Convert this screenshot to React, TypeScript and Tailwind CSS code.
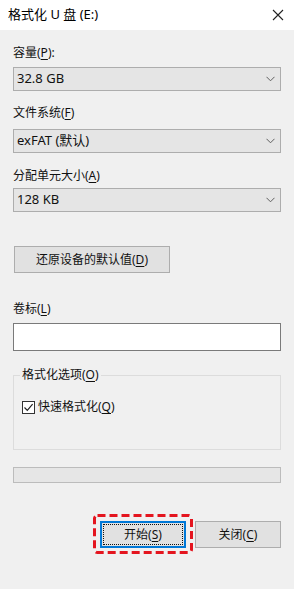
import React from "react";

const Chevron = () => (
  <svg width="9" height="6" viewBox="0 0 9 6" className="shrink-0">
    <path d="M0.5 0.8 L4.5 4.8 L8.5 0.8" fill="none" stroke="#5f5f5f" strokeWidth="1" />
  </svg>
);

const Combo = ({ value }: { value: string }) => (
  <div className="h-[24px] border border-[#adadad] bg-[#e5e5e5] flex items-center pl-[3px] pr-[5px] justify-between">
    <span className="text-[13px] text-[#111]">{value}</span>
    <Chevron />
  </div>
);

const U = ({ c }: { c: string }) => <span className="underline underline-offset-2">{c}</span>;

export default function App() {
  return (
    <div className="w-[294px] h-[589px] bg-[#f0f0f0] flex flex-col text-[12px] text-[#111] font-['Segoe_UI','Noto_Sans','Noto_Sans_CJK_SC',sans-serif] overflow-hidden">
      <div className="h-[30px] bg-white flex items-center justify-between pl-[8px] pr-[10px]">
        <span className="text-[13px] text-black">格式化 U 盘 (E:)</span>
        <svg width="12" height="12" viewBox="0 0 12 12">
          <path d="M1 1 L11 11 M11 1 L1 11" stroke="#222" strokeWidth="1.1" fill="none" />
        </svg>
      </div>
      <div className="flex flex-col px-[13px]">
        <div className="mt-[15px] h-[16px] leading-[16px]">容量(<U c="P" />):</div>
        <div className="mt-[6px]"><Combo value="32.8 GB" /></div>
        <div className="mt-[14px] h-[16px] leading-[16px]">文件系统(<U c="F" />)</div>
        <div className="mt-[8px]"><Combo value="exFAT (默认)" /></div>
        <div className="mt-[15px] h-[16px] leading-[16px]">分配单元大小(<U c="A" />)</div>
        <div className="mt-[4px]"><Combo value="128 KB" /></div>
        <div className="mt-[34px] ml-[1px] w-[156px] h-[27px] border border-[#adadad] bg-[#e1e1e1] flex items-center justify-center">
          还原设备的默认值(<U c="D" />)
        </div>
        <div className="mt-[28px] h-[16px] leading-[16px]">卷标(<U c="L" />)</div>
        <div className="mt-[6px] h-[28px] border border-[#7a7a7a] bg-white" />
        <div className="mt-[24px] h-[75px] border border-[#dcdcdc] relative">
          <div className="absolute -top-[9px] left-[6px] px-[2px] bg-[#f0f0f0] leading-[16px]">格式化选项(<U c="O" />)</div>
          <div className="mt-[23px] ml-[8px] flex items-center gap-[3px]">
            <div className="w-[13px] h-[13px] border border-[#333] bg-white flex items-center justify-center">
              <svg width="11" height="11" viewBox="0 0 11 11">
                <path d="M1.5 5.5 L4.3 8.4 L9.6 2.2" fill="none" stroke="#222" strokeWidth="1.2" />
              </svg>
            </div>
            <span className="leading-[16px]">快速格式化(<U c="Q" />)</span>
          </div>
        </div>
        <div className="mt-[17px] h-[16px] border border-[#bcbcbc] bg-[#e6e6e6]" />
        <div className="mt-[38px] flex justify-end gap-[9px]">
          <div className="relative">
            <div className="w-[86px] h-[27px] border-[2px] border-[#0078d7] bg-[#e1e1e1] p-[1px]">
              <div className="w-full h-full border border-dotted border-[#111] flex items-center justify-center">
                开始(<U c="S" />)
              </div>
            </div>
            <svg className="absolute -left-[7px] -top-[7px] pointer-events-none" width="100" height="40" viewBox="0 0 100 40">
              <rect x="1.5" y="1.5" width="97" height="37" rx="3" fill="none" stroke="#e4151f" strokeWidth="3" strokeDasharray="8 4" />
            </svg>
          </div>
          <div className="w-[86px] h-[27px] border border-[#adadad] bg-[#e1e1e1] flex items-center justify-center">
            关闭(<U c="C" />)
          </div>
        </div>
      </div>
    </div>
  );
}
